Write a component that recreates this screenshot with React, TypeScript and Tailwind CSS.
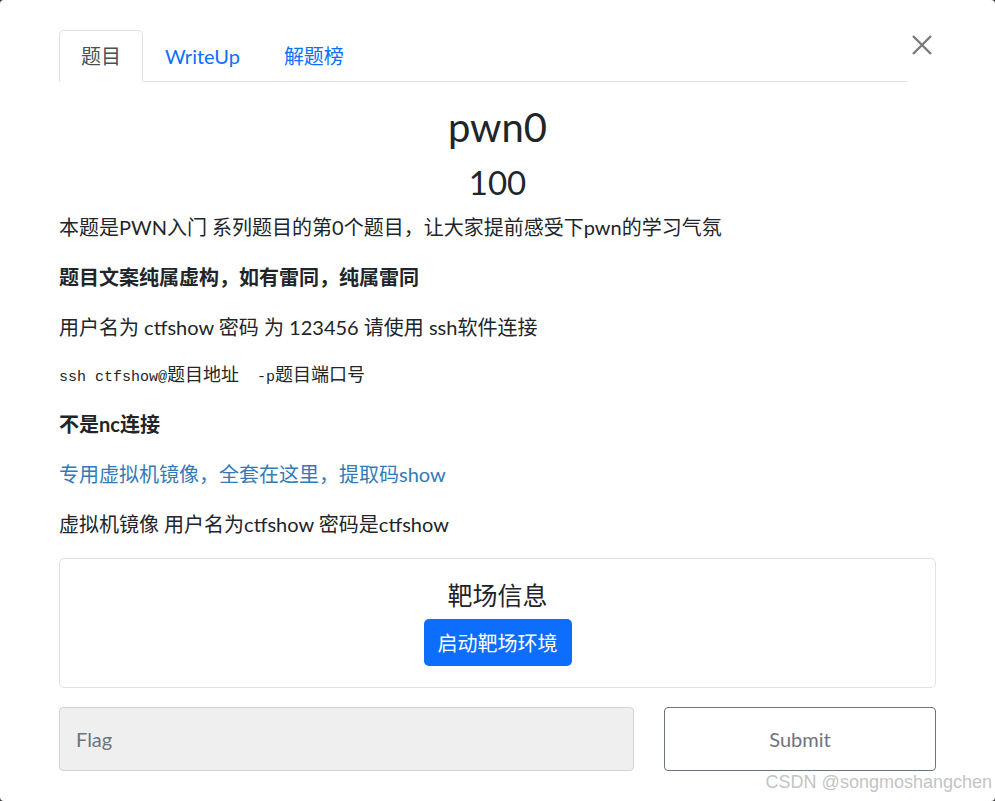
const sans = "font-['Lato','Noto_Sans_CJK_SC',sans-serif]";

function CloseIcon() {
  return (
    <svg width="22" height="22" viewBox="0 0 22 22" fill="none">
      <path d="M2 2L20 20M20 2L2 20" stroke="#7a7a7a" strokeWidth="2.4" />
    </svg>
  );
}

export default function App() {
  return (
    <div className="h-[801px] w-[995px] bg-[#3a3a3a]">
      <div
        className={`relative h-full w-full rounded-[4px] bg-white px-[59px] pt-[30px] text-[#212529] ${sans}`}
      >
        {/* tabs */}
        <div className="flex items-start">
          <ul className="flex flex-1 border-b border-[#dee2e6]">
            <li className="-mb-px rounded-t-[5px] border border-[#dee2e6] border-b-white bg-white px-[21px] pt-[10px] pb-[9px] text-[20px] leading-[30px] text-[#495057]">
              题目
            </li>
            <li className="border border-transparent px-[21px] pt-[10px] pb-[9px] text-[20px] leading-[30px] text-[#0d6efd]">
              WriteUp
            </li>
            <li className="border border-transparent px-[21px] pt-[10px] pb-[9px] text-[20px] leading-[30px] text-[#0d6efd]">
              解题榜
            </li>
          </ul>
          <button className="mt-[4px] flex w-[29px] justify-end pr-[3px]">
            <CloseIcon />
          </button>
        </div>

        <h2 className="mt-[21px] text-center text-[40px] leading-[48px] font-normal">
          pwn0
        </h2>
        <h3 className="mt-[11px] text-center text-[33px] leading-[40px] font-normal">
          100
        </h3>

        <div className="mt-[10px] text-[20px] leading-[30px]">
          <p className="mb-[20px]">
            本题是PWN入门 系列题目的第0个题目，让大家提前感受下pwn的学习气氛
          </p>
          <p className="mb-[20px] font-bold">
            题目文案纯属虚构，如有雷同，纯属雷同
          </p>
          <p className="mb-[20px]">
            用户名为 ctfshow 密码 为 123456 请使用 ssh软件连接
          </p>
          <pre className="mb-[19px] pt-[2px] font-['Liberation_Mono','Noto_Sans_CJK_SC',monospace] text-[15px] leading-[24px]">
            ssh ctfshow@<span className="text-[18px]">题目地址</span>  -p
            <span className="text-[18px]">题目端口号</span>
          </pre>
          <p className="mb-[20px] font-bold">不是nc连接</p>
          <p className="mb-[20px] text-[#337ab7]">
            专用虚拟机镜像，全套在这里，提取码show
          </p>
          <p className="mb-[19px]">虚拟机镜像 用户名为ctfshow 密码是ctfshow</p>
        </div>

        {/* 靶场 card */}
        <div className="flex flex-col items-center rounded-[5px] border border-[#dee2e6] py-[21px]">
          <h4 className="mb-[9px] text-[25px] leading-[30px]">靶场信息</h4>
          <button className="h-[47px] rounded-[5px] bg-[#0d6efd] px-[14px] text-[20px] text-white">
            启动靶场环境
          </button>
        </div>

        {/* flag form */}
        <div className="mt-[19px] flex gap-[30px]">
          <input
            placeholder="Flag"
            className="h-[64px] flex-1 rounded-[4px] border border-[#ced4da] bg-[#efefef] px-[16px] text-[20px] placeholder:text-[#6c757d]"
          />
          <button className="h-[64px] w-[272px] rounded-[4px] border border-[#6c757d] bg-white text-[20px] text-[#6c757d]">
            Submit
          </button>
        </div>

        <div className="absolute right-[3px] bottom-[5px] font-['Liberation_Sans',sans-serif] text-[18px] text-[#c4c4c4]">
          CSDN @songmoshangchen
        </div>
      </div>
    </div>
  );
}
